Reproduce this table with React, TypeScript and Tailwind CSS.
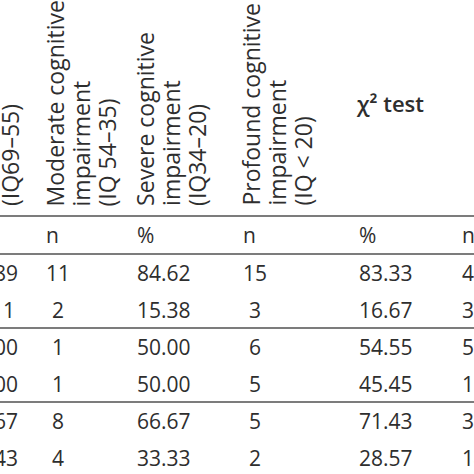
import React from 'react';

type Row = { a: string; aPad?: string; n1: string; p1: string; n2: string; p2: string; n3: string };

const rowGroups: Row[][] = [
    [
        { a: '88.89', n1: '11', p1: '84.62', n2: '15', p2: '83.33', n3: '40' },
        { a: '1', aPad: 'pr-[31px]', n1: '2', p1: '15.38', n2: '3', p2: '16.67', n3: '36' },
    ],
    [
        { a: '50.00', n1: '1', p1: '50.00', n2: '6', p2: '54.55', n3: '50' },
        { a: '50.00', n1: '1', p1: '50.00', n2: '5', p2: '45.45', n3: '12' },
    ],
    [
        { a: '56.67', n1: '8', p1: '66.67', n2: '5', p2: '71.43', n3: '30' },
        { a: '43.43', n1: '4', p1: '33.33', n2: '2', p2: '28.57', n3: '14' },
    ],
];

const RotatedHead: React.FC<{ lines: string[] }> = ({ lines }) => (
    <div className="shrink-0 whitespace-nowrap text-[23px] leading-[26px] [writing-mode:vertical-rl] rotate-180">
        {lines.map((l, i) => (
            <div key={i}>{l}</div>
        ))}
    </div>
);

const Rule = () => <div className="h-[2px] bg-[#7c7c7c]" />;

const DataRow: React.FC<{ row: Row; second?: boolean }> = ({ row, second }) => (
    <div className={second ? 'flex h-[36px] pt-[3px] leading-[32px]' : 'flex h-[36px] leading-[36px]'}>
        <div className={`flex w-[46px] shrink-0 justify-end ${row.aPad ?? 'pr-[28px]'}`}>
            <span className="shrink-0 whitespace-nowrap">{row.a}</span>
        </div>
        <div className="w-[91px] shrink-0">
            <span className="inline-block w-[24px] text-center">{row.n1}</span>
        </div>
        <div className="w-[106px] shrink-0">{row.p1}</div>
        <div className="w-[116px] shrink-0">
            <span className="inline-block w-[24px] text-center">{row.n2}</span>
        </div>
        <div className="w-[103px] shrink-0">{row.p2}</div>
        <div className="flex-1 whitespace-nowrap">{row.n3}</div>
    </div>
);

export default function App() {
    return (
        <div className="h-[474px] w-[474px] overflow-hidden bg-white font-['Open_Sans',sans-serif] text-[#2e2e2e]">
            {/* rotated column headings */}
            <div className="flex h-[215px] items-end pb-[9px]">
                <div className="flex w-[42px] shrink-0 justify-end pr-[19px]">
                    <RotatedHead lines={['Mild cognitive', 'impairment', '(IQ69–55)']} />
                </div>
                <div className="w-[90px] shrink-0">
                    <RotatedHead lines={['Moderate cognitive', 'impairment', '(IQ 54–35)']} />
                </div>
                <div className="w-[106px] shrink-0">
                    <RotatedHead lines={['Severe cognitive', 'impairment', '(IQ34–20)']} />
                </div>
                <div className="w-[119px] shrink-0">
                    <RotatedHead lines={['Profound cognitive', 'impairment', '(IQ < 20)']} />
                </div>
                <div className="self-center whitespace-nowrap text-[22px] font-semibold">χ² test</div>
            </div>
            <Rule />
            <div className="flex h-[36px] text-[21px] leading-[36px]">
                <div className="w-[46px] shrink-0" />
                <div className="w-[91px] shrink-0">n</div>
                <div className="w-[106px] shrink-0">%</div>
                <div className="w-[116px] shrink-0">n</div>
                <div className="w-[103px] shrink-0">%</div>
                <div className="flex-1">n</div>
            </div>
            <Rule />
            <div className="text-[21px]">
                {rowGroups.map((g, gi) => (
                    <div key={gi}>
                        {gi > 0 && <Rule />}
                        <DataRow row={g[0]} />
                        <DataRow row={g[1]} second />
                    </div>
                ))}
            </div>
        </div>
    );
}
